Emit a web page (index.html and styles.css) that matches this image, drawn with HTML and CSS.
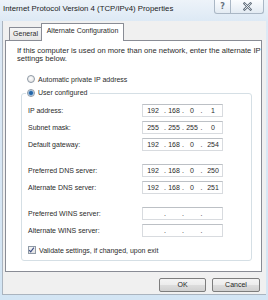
FILE: index.html
```html
<!DOCTYPE html>
<html>
<head>
<meta charset="utf-8">
<link rel="stylesheet" href="styles.css">
</head>
<body>
<div class="window">
  <div class="titlebar">
    <span class="title">Internet Protocol Version 4 (TCP/IPv4) Properties</span>
    <div class="caption">
      <div class="cbtn help"><span class="qmark">?</span></div>
      <div class="cbtn close">
        <svg width="9" height="9" viewBox="0 0 9 9"><path d="M1.5 1.5 L7.5 7.5 M7.5 1.5 L1.5 7.5" stroke="#66727f" stroke-width="2.4" stroke-linecap="square"/><path d="M1.5 1.5 L7.5 7.5 M7.5 1.5 L1.5 7.5" stroke="#f2f5f8" stroke-width="0.9"/></svg>
      </div>
    </div>
  </div>
  <div class="client">
    <div class="tabs">
      <div class="tab">General</div>
      <div class="tab active">Alternate Configuration</div>
    </div>
    <div class="panel">
      <p class="intro">If this computer is used on more than one network, enter the alternate IP<br>settings below.</p>
      <div class="radio-row"><span class="rb"></span><span>Automatic private IP address</span></div>
      <fieldset class="group">
        <legend class="legend"><span class="rb on"></span><span>User configured</span></legend>
        <div class="row first"><span class="lbl">IP address:</span><div class="ip"><span>192</span><i>.</i><span>168</span><i>.</i><span>0</span><i>.</i><span>1</span></div></div>
        <div class="row"><span class="lbl">Subnet mask:</span><div class="ip"><span>255</span><i>.</i><span>255</span><i>.</i><span>255</span><i>.</i><span>0</span></div></div>
        <div class="row"><span class="lbl">Default gateway:</span><div class="ip"><span>192</span><i>.</i><span>168</span><i>.</i><span>0</span><i>.</i><span>254</span></div></div>
        <div class="row sep"><span class="lbl">Preferred DNS server:</span><div class="ip"><span>192</span><i>.</i><span>168</span><i>.</i><span>0</span><i>.</i><span>250</span></div></div>
        <div class="row"><span class="lbl">Alternate DNS server:</span><div class="ip"><span>192</span><i>.</i><span>168</span><i>.</i><span>0</span><i>.</i><span>251</span></div></div>
        <div class="row sep"><span class="lbl">Preferred WINS server:</span><div class="ip"><span></span><i>.</i><span></span><i>.</i><span></span><i>.</i><span></span></div></div>
        <div class="row"><span class="lbl">Alternate WINS server:</span><div class="ip"><span></span><i>.</i><span></span><i>.</i><span></span><i>.</i><span></span></div></div>
        <div class="check-row">
          <span class="cb"><svg width="8" height="8" viewBox="0 0 8 8"><path d="M1.4 4.2 L3.1 6.2 L6.7 1.2" fill="none" stroke="#3d4f86" stroke-width="1.3"/></svg></span>
          <span>Validate settings, if changed, upon exit</span>
        </div>
      </fieldset>
    </div>
    <div class="buttons">
      <button class="btn ok">OK</button>
      <button class="btn cancel">Cancel</button>
    </div>
  </div>
</div>
</body>
</html>
```
FILE: styles.css
```css
* { box-sizing: border-box; }
html, body { margin: 0; padding: 0; }
body {
  width: 268px;
  height: 300px;
  overflow: hidden;
  font-family: "Liberation Sans", Arial, sans-serif;
  font-size: 7px;
  color: #2b2b2b;
}
.window {
  width: 268px;
  height: 300px;
  display: flex;
  flex-direction: column;
  background: linear-gradient(to bottom, #edf3f9 0, #dde9f5 21px, #d3e5f4 100%);
}
.titlebar {
  height: 21px;
  flex: none;
  display: flex;
  align-items: flex-start;
}
.title {
  padding: 5px 0 0 3px;
  line-height: 8px;
  font-size: 7.8px;
  color: #1c1c1c;
  white-space: nowrap;
}
.caption {
  margin-left: auto;
  margin-right: 4px;
  display: flex;
}
.cbtn {
  height: 14px;
  border: 1px solid #aab7c5;
  border-top: none;
  background: linear-gradient(#fafcfe, #e3ebf3);
  display: flex;
  align-items: center;
  justify-content: center;
}
.cbtn.help { width: 17px; border-radius: 0 0 0 3px; }
.cbtn.close { width: 33px; border-left: none; border-radius: 0 0 3px 0; }
.qmark {
  font-family: "DejaVu Sans", sans-serif;
  font-size: 8px;
  font-weight: bold;
  color: #66727f;
  line-height: 8px;
}
.client {
  margin-left: 2px;
  width: 264px;
  height: 274px;
  flex: none;
  background: #f0f0f0;
  border-left: 1px solid #aab4bf;
  border-bottom: 1px solid #aab4bf;
  display: flex;
  flex-direction: column;
}
.tabs {
  margin-top: 2px;
  height: 18px;
  margin-bottom: -1px;
  padding-left: 6px;
  display: flex;
  align-items: flex-end;
}
.tab {
  height: 14px;
  width: 33px;
  border: 1px solid #898c95;
  border-bottom: none;
  border-radius: 1px 1px 0 0;
  background: linear-gradient(#f6f6f6, #e4e4e4);
  text-align: center;
  padding-top: 1px;
  line-height: 9px;
  white-space: nowrap;
}
.tab.active {
  position: relative;
  z-index: 1;
  margin-left: -1px;
  width: 83px;
  height: 18px;
  background: #fff;
  padding-top: 2px;
  line-height: 10px;
}
.panel {
  margin-left: 2px;
  width: 257px;
  height: 232px;
  flex: none;
  border: 1px solid #898c95;
  background: #fff;
  display: flex;
  flex-direction: column;
}
.intro {
  margin: 6px 0 0 11px;
  line-height: 8px;
  font-size: 7.6px;
  white-space: nowrap;
}
.radio-row {
  margin: 11px 0 0 21px;
  height: 10px;
  display: flex;
  align-items: center;
  gap: 3px;
}
.rb {
  width: 8px;
  height: 8px;
  flex: none;
  border-radius: 50%;
  border: 1px solid #8e99a5;
  background: radial-gradient(circle at 45% 40%, #ffffff 0, #e6e6e6 70%, #d4d4d4 100%);
}
.rb.on {
  background: radial-gradient(circle at 50% 50%, #1d5a9a 0, #2e6fb0 1.6px, #a9c8e6 2.6px, #f3f3f3 3.2px);
}
.group {
  margin: 4px 0 0 15px;
  width: 231px;
  padding: 0 0 5px 0;
  border: 1px solid #d5dfe5;
  border-radius: 3px;
  min-width: 0;
}
.legend {
  margin-left: 4px;
  padding: 0 3px 0 1px;
  height: 10px;
  display: flex;
  align-items: center;
  gap: 3px;
  line-height: 10px;
}
.row {
  margin: 4px 0 0 6px;
  height: 13px;
  display: flex;
  align-items: center;
}
.row.first { margin-top: 6px; }
.row.sep { margin-top: 13px; }
.lbl {
  width: 114px;
  flex: none;
  white-space: nowrap;
}
.ip {
  width: 81px;
  height: 13px;
  border: 1px solid #d8dbdf;
  border-top-color: #bcc0c5;
  background: #fff;
  display: grid;
  grid-template-columns: 20px 4px 14px 4px 14px 5px 1fr;
  align-items: center;
  line-height: 11px;
}
.ip span { text-align: center; white-space: nowrap; }
.ip i { font-style: normal; text-align: center; }
.check-row {
  margin: 8px 0 0 6px;
  height: 10px;
  display: flex;
  align-items: center;
  gap: 3px;
}
.cb {
  width: 8px;
  height: 8px;
  flex: none;
  border: 1px solid #8e99a5;
  background: linear-gradient(#f4f4f4, #e2e2e2);
  display: flex;
}
.cb svg { margin: -1px 0 0 -1px; }
.buttons {
  margin-top: 6px;
  padding-right: 6px;
  display: flex;
  justify-content: flex-end;
  gap: 6px;
}
.btn {
  height: 14px;
  padding: 0;
  border: 1px solid #7d7d7d;
  border-radius: 2px;
  background: linear-gradient(#f4f4f4 0, #ececec 50%, #dddddd 51%, #d0d0d0 100%);
  font-family: "Liberation Sans", Arial, sans-serif;
  font-size: 7px;
  color: #262626;
  line-height: 12px;
}
.btn.ok { width: 47px; }
.btn.cancel { width: 48px; }
```
